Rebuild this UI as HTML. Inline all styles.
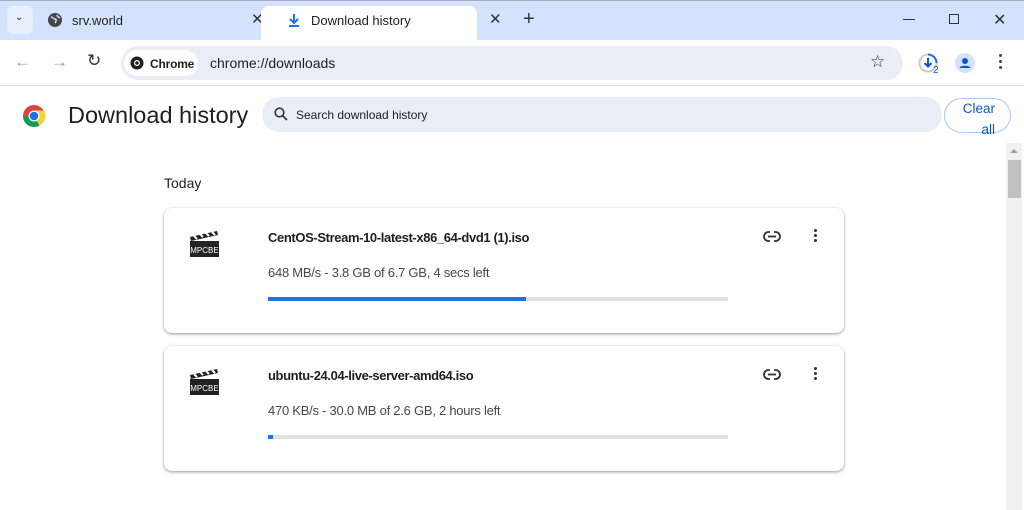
<!DOCTYPE html><html><head><style>
*{margin:0;padding:0;box-sizing:border-box}
body{width:1024px;height:510px;overflow:hidden;font-family:"Liberation Sans",sans-serif;background:#fff;position:relative}
.abs{position:absolute}
.card{position:absolute;left:164px;width:680px;background:#fff;border-radius:8px;box-shadow:0 1px 3px rgba(0,0,0,.3),0 1px 2px rgba(0,0,0,.15)}
.name{position:absolute;left:104px;font-size:13px;font-weight:bold;color:#1f1f1f;letter-spacing:-0.38px}
.st{position:absolute;left:104px;font-size:13px;color:#474747;letter-spacing:-0.25px}
.bar{position:absolute;left:104px;width:460px;height:4px;background:#e0e0e0}
.bar i{display:block;height:4px;background:#1a73e8}
.ico{position:absolute;left:25px;width:30px;height:30px}
</style></head><body>
<div class="abs" style="left:0;top:0;width:1024px;height:40px;background:#d3e3fd;border-top:1px solid #aab"></div>
<div class="abs" style="left:7px;top:6px;width:26px;height:28px;background:#e6eefc;border-radius:6px"></div>
<div class="abs" style="left:15px;top:12px;font-size:10px;color:#1f1f1f">&#8964;</div>
<svg class="abs" style="left:47px;top:12px" width="16" height="16" viewBox="0 0 16 16"><circle cx="8" cy="8" r="7" fill="#474747"/><path d="M4 5c2 0 2 2 4 2s1 3 0 4M10 3c0 2 2 2 3 3" stroke="#d3e3fd" stroke-width="1.4" fill="none"/></svg>
<div class="abs" style="left:72px;top:13px;font-size:13px;color:#1f1f1f">srv.world</div>
<div class="abs" style="left:251px;top:10px;font-size:15px;color:#333">✕</div>
<div class="abs" style="left:261px;top:6px;width:216px;height:40px;background:#fff;border-radius:8px 8px 0 0"></div>
<svg class="abs" style="left:288px;top:13px" width="12" height="14" viewBox="0 0 12 14"><path d="M6 1v8M2 6l4 4 4-4" stroke="#1a73e8" stroke-width="2" fill="none"/><path d="M1 13h10" stroke="#1a73e8" stroke-width="2"/></svg>
<div class="abs" style="left:311px;top:13px;font-size:13px;color:#1f1f1f">Download history</div>
<div class="abs" style="left:489px;top:10px;font-size:15px;color:#333">✕</div>
<div class="abs" style="left:523px;top:8px;font-size:20px;color:#333">+</div>
<div class="abs" style="left:903px;top:19px;width:12px;height:1px;background:#333"></div>
<div class="abs" style="left:949px;top:14px;width:10px;height:10px;border:1.3px solid #333"></div>
<div class="abs" style="left:993px;top:10px;font-size:16px;color:#333">✕</div>
<div class="abs" style="left:0;top:40px;width:1024px;height:46px;background:#fff;border-bottom:1px solid #e3e3e3"></div>
<div class="abs" style="left:14px;top:52px;font-size:17px;color:#999">←</div>
<div class="abs" style="left:51px;top:52px;font-size:17px;color:#999">→</div>
<div class="abs" style="left:87px;top:51px;font-size:17px;color:#333">↻</div>
<div class="abs" style="left:121px;top:46px;width:782px;height:34px;background:#e9eef6;border-radius:17px"></div>
<div class="abs" style="left:124px;top:50px;width:74px;height:26px;background:#fff;border-radius:13px"></div>
<svg class="abs" style="left:130px;top:56px" width="14" height="14" viewBox="0 0 14 14"><circle cx="7" cy="7" r="6.5" fill="#1f1f1f"/><circle cx="7" cy="7" r="3" fill="#fff"/><circle cx="7" cy="7" r="1.8" fill="#1f1f1f"/></svg>
<div class="abs" style="left:150px;top:57px;font-size:12px;font-weight:bold;color:#1f1f1f;letter-spacing:-0.2px">Chrome</div>
<div class="abs" style="left:210px;top:55px;font-size:14px;color:#1f1f1f">chrome://downloads</div>
<div class="abs" style="left:870px;top:52px;font-size:17px;color:#333">☆</div>
<svg class="abs" style="left:918px;top:52px" width="24" height="26" viewBox="0 0 24 26"><circle cx="10" cy="11" r="8.5" stroke="#ccc" stroke-width="2" fill="none"/><path d="M10 2.5a8.5 8.5 0 0 1 8.5 8.5" stroke="#1a73e8" stroke-width="2" fill="none"/><path d="M10 6v8M6.5 11l3.5 3.5 3.5-3.5" stroke="#0b57d0" stroke-width="2" fill="none"/></svg>
<div class="abs" style="left:933px;top:65px;font-size:10px;color:#0b57d0">2</div>
<div class="abs" style="left:955px;top:53px;width:20px;height:20px;border-radius:50%;background:#d3e3fd"></div>
<svg class="abs" style="left:955px;top:53px" width="20" height="20" viewBox="0 0 20 20"><circle cx="10" cy="8" r="3" fill="#0b57d0"/><path d="M4.5 15c0-3 11-3 11 0z" fill="#0b57d0"/></svg>
<div class="abs" style="left:999px;top:54px;width:3px;height:3px;border-radius:50%;background:#444;box-shadow:0 6px 0 #444,0 12px 0 #444"></div>
<svg class="abs" style="left:22px;top:104px" width="24" height="24" viewBox="-12 -12 24 24"><circle r="11" fill="#db4437"/><path d="M0 0L-11 0A11 11 0 0 0 5.5 9.5z" fill="#0f9d58"/><path d="M0 0L5.5 9.5A11 11 0 0 0 11 0z" fill="#ffcd40"/><path d="M0-5.5H10A11 11 0 0 1 5.5 9.5z" fill="#ffcd40"/><path d="M-9.5-5.5L-4.7 2.7 0 0z" fill="#db4437"/><circle r="5.5" fill="#fff"/><circle r="4.3" fill="#1a73e8"/></svg>
<div class="abs" style="left:68px;top:102px;font-size:23.5px;color:#1f1f1f">Download history</div>
<div class="abs" style="left:262px;top:97px;width:680px;height:35px;background:#e9eef6;border-radius:18px"></div>
<svg class="abs" style="left:274px;top:107px" width="14" height="14" viewBox="0 0 14 14"><circle cx="5.5" cy="5.5" r="4.3" stroke="#333" stroke-width="1.6" fill="none"/><path d="M8.7 8.7L13 13" stroke="#333" stroke-width="1.8"/></svg>
<div class="abs" style="left:296px;top:108px;font-size:12px;color:#1f1f1f">Search download history</div>
<div class="abs" style="left:944px;top:98px;width:67px;height:35px;border:1px solid #a8c7fa;border-radius:18px"></div>
<div class="abs" style="top:98px;font-size:13.5px;color:#0b57d0;text-align:right;line-height:21px;left:955px;width:40px">Clear<br>all</div>
<div class="abs" style="left:1006px;top:143px;width:16px;height:367px;background:#f1f1f1"></div>
<div class="abs" style="left:1008px;top:160px;width:13px;height:38px;background:#c1c1c1"></div>
<div class="abs" style="left:1010px;top:149px;width:0;height:0;border-left:4px solid transparent;border-right:4px solid transparent;border-bottom:4px solid #a3a3a3"></div>
<div class="abs" style="left:164px;top:175px;font-size:14px;color:#1f1f1f">Today</div>
<div class="card" style="top:208px;height:125px">
<svg class="ico" style="top:20px" viewBox="0 0 30 30"><path d="M1 9L28 3l1 4L2 13z" fill="#222"/><path d="M5 8l3 3M11 6l3 3M17 5l3 3M23 4l3 3" stroke="#fff" stroke-width="2"/><rect x="1" y="13" width="29" height="16" fill="#222"/><text x="15.5" y="25" font-size="8" fill="#fff" text-anchor="middle" font-family="Liberation Sans">MPCBE</text></svg>
<div class="name" style="top:22px">CentOS-Stream-10-latest-x86_64-dvd1 (1).iso</div>
<div class="st" style="top:57px">648 MB/s - 3.8 GB of 6.7 GB, 4 secs left</div>
<div class="bar" style="top:89px"><i style="width:258px"></i></div>
<svg class="abs" style="left:599px;top:23px" width="18" height="11" viewBox="0 0 18 11"><rect x="1" y="1" width="16" height="9" rx="4.5" stroke="#333" stroke-width="1.8" fill="none"/><rect x="7" y="0" width="4" height="3" fill="#fff"/><rect x="7" y="8" width="4" height="3" fill="#fff"/><path d="M5 5.5h8" stroke="#333" stroke-width="1.8"/></svg>
<div class="abs" style="left:650px;top:21px;width:3px;height:3px;border-radius:50%;background:#333;box-shadow:0 5px 0 #333,0 10px 0 #333"></div>
</div>
<div class="card" style="top:346px;height:125px">
<svg class="ico" style="top:20px" viewBox="0 0 30 30"><path d="M1 9L28 3l1 4L2 13z" fill="#222"/><path d="M5 8l3 3M11 6l3 3M17 5l3 3M23 4l3 3" stroke="#fff" stroke-width="2"/><rect x="1" y="13" width="29" height="16" fill="#222"/><text x="15.5" y="25" font-size="8" fill="#fff" text-anchor="middle" font-family="Liberation Sans">MPCBE</text></svg>
<div class="name" style="top:22px">ubuntu-24.04-live-server-amd64.iso</div>
<div class="st" style="top:57px">470 KB/s - 30.0 MB of 2.6 GB, 2 hours left</div>
<div class="bar" style="top:89px"><i style="width:5px"></i></div>
<svg class="abs" style="left:599px;top:23px" width="18" height="11" viewBox="0 0 18 11"><rect x="1" y="1" width="16" height="9" rx="4.5" stroke="#333" stroke-width="1.8" fill="none"/><rect x="7" y="0" width="4" height="3" fill="#fff"/><rect x="7" y="8" width="4" height="3" fill="#fff"/><path d="M5 5.5h8" stroke="#333" stroke-width="1.8"/></svg>
<div class="abs" style="left:650px;top:21px;width:3px;height:3px;border-radius:50%;background:#333;box-shadow:0 5px 0 #333,0 10px 0 #333"></div>
</div>
</body></html>
